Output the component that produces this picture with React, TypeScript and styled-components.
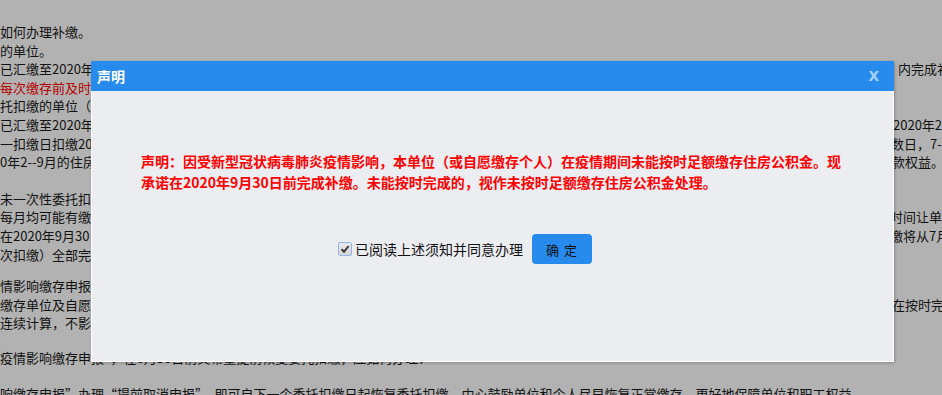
import React from 'react';
import styled, { createGlobalStyle } from 'styled-components';

// 背景页面（被遮罩压暗）+ 声明弹窗

const GlobalStyles = createGlobalStyle`
  * {
    margin: 0;
    padding: 0;
    box-sizing: border-box;
  }

  html, body {
    width: 100%;
    height: 100%;
    overflow: hidden;
  }

  body {
    background: #fff;
    color: #222;
    font-family: "Noto Sans CJK SC", "Microsoft YaHei", sans-serif;
  }
`;

const Page = styled.div`
  padding-top: 23px;
  font-size: 13px;
  line-height: 18.6px;
`;

const Paragraph = styled.div<{ $gap?: number }>`
  margin-top: ${({ $gap }) => $gap ?? 0}px;
`;

const Line = styled.div<{ $red?: boolean }>`
  display: flex;
  white-space: nowrap;
  color: ${({ $red }) => ($red ? '#ff0000' : '#1a1a1a')};
`;

const Lead = styled.span<{ $split: number }>`
  flex: 0 0 ${({ $split }) => $split}px;
  overflow: hidden;
`;

const Overlay = styled.div`
  position: fixed;
  inset: 0;
  background: rgba(0, 0, 0, 0.3);
`;

const Modal = styled.div`
  position: fixed;
  left: 91px;
  top: 61px;
  width: 803px;
  height: 301px;
  display: flex;
  flex-direction: column;
  box-shadow: 1px 1px 3px rgba(0, 0, 0, 0.25);
`;

const Header = styled.div`
  height: 30px;
  flex: none;
  display: flex;
  align-items: center;
  justify-content: space-between;
  padding: 0 15px 0 6px;
  background: #278bee;
`;

const Title = styled.h3`
  font-size: 14px;
  font-weight: 700;
  color: #fff;
  line-height: 30px;
`;

const Close = styled.button`
  border: none;
  background: transparent;
  font-family: "Liberation Sans", Arial, sans-serif;
  font-size: 19px;
  font-weight: 700;
  line-height: 20px;
  color: rgba(255, 255, 255, 0.62);
  padding: 0 0 3px;
  cursor: pointer;
`;

const Body = styled.div`
  flex: 1;
  background: #ecedf1;
  border: 1px solid #fff;
  border-top: none;
  padding: 60px 0 0 49px;
`;

const Notice = styled.p`
  width: 712px;
  font-size: 14px;
  font-weight: 700;
  line-height: 21px;
  color: #ff0000;
`;

const AgreeRow = styled.div`
  display: flex;
  align-items: center;
  margin-top: 41px;
  padding-left: 197px;
`;

const CheckLabel = styled.label`
  display: flex;
  align-items: center;
  gap: 3px;
  font-size: 14px;
  color: #111;
  cursor: pointer;
`;

const CheckBox = styled.span`
  width: 14px;
  height: 14px;
  border: 1px solid #8fb6e6;
  border-radius: 2px;
  background: linear-gradient(#e9e9e9, #d6d6d6);
  display: flex;
  align-items: center;
  justify-content: center;
`;

const ConfirmButton = styled.button`
  margin-left: 9px;
  width: 60px;
  height: 30px;
  border: none;
  border-radius: 4px;
  background: #278bee;
  color: #111;
  font-family: "Noto Sans CJK SC", sans-serif;
  font-size: 13px;
  letter-spacing: 1px;
  cursor: pointer;
`;

type Row = { text: string; split?: number; tail?: string; red?: boolean };

const paragraphs: { gap: number; rows: Row[] }[] = [
  {
    gap: 0,
    rows: [
      { text: '如何办理补缴。' },
      { text: '的单位。' },
      {
        text: '已汇缴至2020年3月，4—6月因受疫情影响未能按时缴存，需在2020年9月30日前完成补缴的单位，应当在规定期限内及时足额',
        split: 898,
        tail: '内完成补缴。',
      },
      { text: '每次缴存前及时足额存入委托扣缴账户，确保扣缴成功。', red: true },
      { text: '托扣缴的单位（或个人），需在缴存前确认账户余额充足。' },
      {
        text: '已汇缴至2020年1月，2月至今未汇缴的单位，可在2020年9月30日前一次性补缴全部欠缴的住房公积金，补缴',
        split: 893,
        tail: '2020年2—9月',
      },
      {
        text: '一扣缴日扣缴2020年的住房公积金，中心将按照委托扣缴约定的扣缴日进行扣缴，如遇节假日顺延至下一工作',
        split: 891,
        tail: '数日，7-9月',
      },
      {
        text: '0年2--9月的住房公积金，补缴后缴存时间连续计算，不影响职工正常提取和申请住房公积金贷',
        split: 892,
        tail: '款权益。',
      },
    ],
  },
  {
    gap: 18,
    rows: [
      { text: '未一次性委托扣缴的单位，可按月委托扣缴，也可在规定时间内一次性补缴。' },
      {
        text: '每月均可能有缴存单位因账户余额不足导致扣缴失败，请在扣缴日前预留足够资金，并给予充足的',
        split: 890,
        tail: '时间让单位',
      },
      {
        text: '在2020年9月30日前未完成补缴的，中心将视作未按时足额缴存处理，委托扣',
        split: 890,
        tail: '缴将从7月',
      },
      { text: '次扣缴）全部完成后恢复正常委托扣缴。' },
    ],
  },
  {
    gap: 13,
    rows: [
      { text: '情影响缴存申报”的单位，请及时办理相关手续。' },
      {
        text: '缴存单位及自愿缴存个人应按照规定及时足额缴存住房公积金，确保职工权益不受影响，并',
        split: 892,
        tail: '在按时完成',
      },
      { text: '连续计算，不影响职工提取及贷款。' },
    ],
  },
  {
    gap: 16,
    rows: [{ text: '疫情影响缴存申报”，在6月30日前又希望提前恢复委托扣缴，应如何办理？' }],
  },
  {
    gap: 17,
    rows: [
      {
        text: '响缴存申报”办理“提前取消申报”，即可自下一个委托扣缴日起恢复委托扣缴。中心鼓励单位和个人尽早恢复正常缴存，更好地保障单位和职工权益。',
      },
    ],
  },
];

const CheckMark = () => (
  <svg width="10" height="10" viewBox="0 0 10 10" aria-hidden="true">
    <path d="M1.5 5.2 L4 7.8 L8.6 2" fill="none" stroke="#3a3a3a" strokeWidth="2" />
  </svg>
);

export default function App() {
  return (
    <>
      <GlobalStyles />
      <Page>
        {paragraphs.map((p, i) => (
          <Paragraph key={i} $gap={p.gap}>
            {p.rows.map((r, j) => (
              <Line key={j} $red={r.red}>
                {r.split ? (
                  <>
                    <Lead $split={r.split}>{r.text}</Lead>
                    <span>{r.tail}</span>
                  </>
                ) : (
                  r.text
                )}
              </Line>
            ))}
          </Paragraph>
        ))}
      </Page>

      <Overlay />

      <Modal>
        <Header>
          <Title>声明</Title>
          <Close>x</Close>
        </Header>
        <Body>
          <Notice>
            声明：因受新型冠状病毒肺炎疫情影响，本单位（或自愿缴存个人）在疫情期间未能按时足额缴存住房公积金。现承诺在2020年9月30日前完成补缴。未能按时完成的，视作未按时足额缴存住房公积金处理。
          </Notice>
          <AgreeRow>
            <CheckLabel>
              <CheckBox>
                <CheckMark />
              </CheckBox>
              已阅读上述须知并同意办理
            </CheckLabel>
            <ConfirmButton>确 定</ConfirmButton>
          </AgreeRow>
        </Body>
      </Modal>
    </>
  );
}
